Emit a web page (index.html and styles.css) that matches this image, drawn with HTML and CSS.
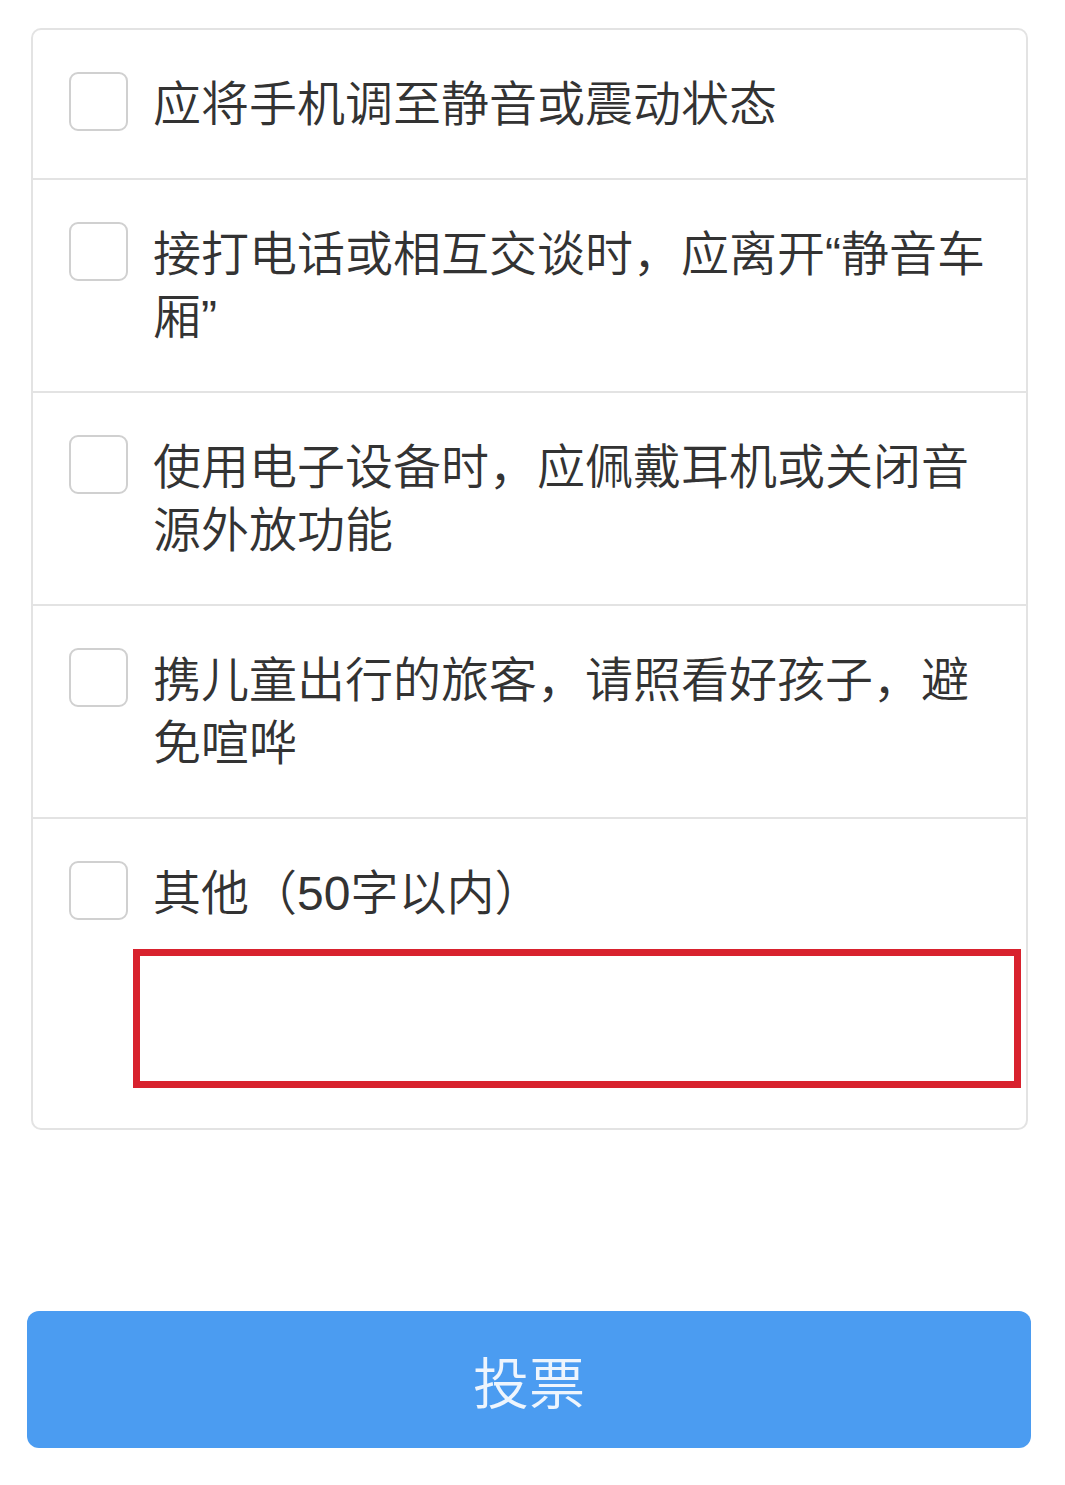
FILE: index.html
```html
<!DOCTYPE html>
<html lang="zh-CN">
<head>
    <meta charset="UTF-8">
    <meta name="viewport" content="width=device-width, initial-scale=1.0">
    <title>投票</title>
    <link rel="stylesheet" href="styles.css">
</head>
<body>
    <div class="page">
        <div class="vote-card">
            <label class="option">
                <input type="checkbox" class="check">
                <span class="option-text">应将手机调至静音或震动状态</span>
            </label>
            <label class="option">
                <input type="checkbox" class="check">
                <span class="option-text">接打电话或相互交谈时，应离开“静音车厢”</span>
            </label>
            <label class="option">
                <input type="checkbox" class="check">
                <span class="option-text">使用电子设备时，应佩戴耳机或关闭音源外放功能</span>
            </label>
            <label class="option">
                <input type="checkbox" class="check">
                <span class="option-text">携儿童出行的旅客，请照看好孩子，避免喧哗</span>
            </label>
            <div class="option option-other">
                <label class="option-line">
                    <input type="checkbox" class="check">
                    <span class="option-text">其他（50字以内）</span>
                </label>
                <input type="text" class="other-input" maxlength="50">
            </div>
        </div>
        <button class="vote-btn">投票</button>
    </div>
</body>
</html>
```

FILE: styles.css
```css
body {
    margin: 0;
    background-color: #fff;
    font-family: "Liberation Sans", "Noto Sans CJK SC", sans-serif;
    color: #333;
}
.page {
    padding: 28px 34px 60px 27px;
}
.vote-card {
    margin: 0 3px 0 4px;
    border: 2px solid #e3e3e3;
    border-radius: 10px;
    background: #fff;
}
.option {
    display: flex;
    align-items: flex-start;
    padding: 43px 30px 42px 36px;
    cursor: pointer;
}
.option + .option {
    border-top: 2px solid #e3e3e3;
}
.option-other {
    flex-direction: column;
    align-items: stretch;
    padding-bottom: 40px;
    cursor: default;
}
.option-line {
    display: flex;
    align-items: flex-start;
    cursor: pointer;
}
.check {
    -webkit-appearance: none;
    appearance: none;
    flex: none;
    width: 59px;
    height: 59px;
    margin: -1px 25px 0 0;
    border: 2px solid #d0d0d0;
    border-radius: 9px;
    background: #fff;
}
.option-text {
    font-size: 48px;
    font-weight: 350;
    line-height: 63px;
    color: #333;
}
.other-input {
    display: block;
    height: 139px;
    margin: 24px -25px 0 64px;
    border: 7px solid #d8222e;
    box-sizing: border-box;
    background: #fff;
    outline: none;
}
.vote-btn {
    display: block;
    width: 100%;
    height: 137px;
    margin-top: 181px;
    border: none;
    border-radius: 12px;
    background-color: #4b9cf1;
    color: #eef5fd;
    font-family: "Noto Sans CJK SC", sans-serif;
    font-size: 56px;
    font-weight: 350;
    cursor: pointer;
}
```
